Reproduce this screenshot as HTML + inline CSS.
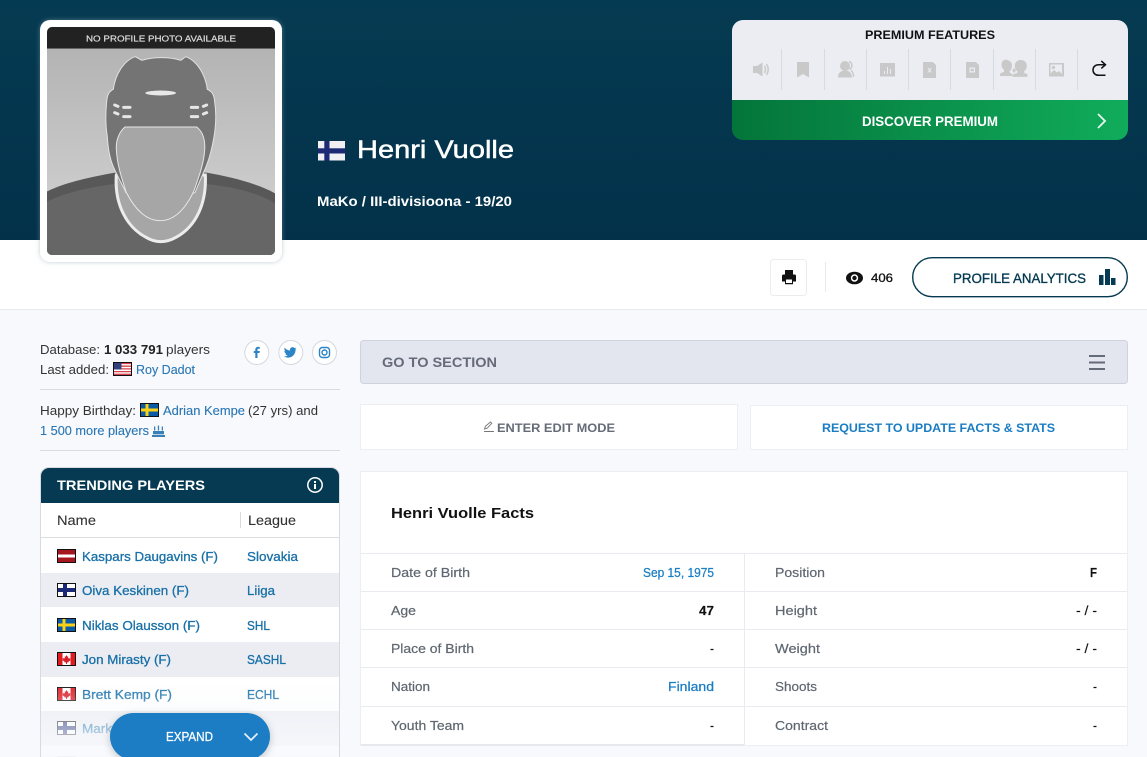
<!DOCTYPE html>
<html lang="en"><head><meta charset="utf-8"><title>Henri Vuolle</title>
<style>
html,body{margin:0;padding:0;width:1147px;height:757px;overflow:hidden;background:#f7f9fd}
svg{display:block}
text{font-family:"Liberation Sans",sans-serif;font-size:13px;white-space:pre}
.b{font-weight:bold}
.lnk{fill:#2a76b3;stroke:#2a76b3;stroke-width:.12}
.tn{fill:#1870a8;font-size:13px;stroke:#1870a8;stroke-width:.3}
.lab{fill:#5f6771;font-size:12.5px;stroke:#5f6771;stroke-width:.2}
.val{fill:#111;font-size:12.5px;stroke:#111;stroke-width:.15}
.blu{fill:#1a7dc4}
.bs{stroke:#1a7dc4;stroke-width:.25}
</style></head><body>
<svg width="1147" height="757" viewBox="0 0 1147 757" xmlns="http://www.w3.org/2000/svg">
<defs>
<linearGradient id="hd" x1="0" y1="0" x2="0" y2="1"><stop offset="0" stop-color="#053b52"/><stop offset="1" stop-color="#03314a"/></linearGradient>
<linearGradient id="ph" x1="0" y1="0" x2="0" y2="1"><stop offset="0" stop-color="#b0b0b0"/><stop offset="1" stop-color="#d6d6d6"/></linearGradient>
<linearGradient id="gr" x1="0" y1="0" x2="1" y2="0"><stop offset="0" stop-color="#04753a"/><stop offset="1" stop-color="#10ac5b"/></linearGradient>
<linearGradient id="fade" x1="0" y1="0" x2="0" y2="1"><stop offset="0" stop-color="#f7f9fd" stop-opacity="0"/><stop offset="1" stop-color="#f7f9fd" stop-opacity=".95"/></linearGradient>
<clipPath id="pc"><rect x="47" y="27" width="228" height="228" rx="5"/></clipPath>
<clipPath id="pm"><rect x="732" y="20" width="396" height="120" rx="11"/></clipPath>
<clipPath id="tc"><path d="M41 757V476a8 8 0 0 1 8-8h282a8 8 0 0 1 8 8v281z"/></clipPath>
<filter id="sh" x="-20%" y="-20%" width="140%" height="140%"><feDropShadow dx="0" dy="0" stdDeviation="2.5" flood-color="#8aa0ac" flood-opacity=".55"/></filter>
<filter id="sh2" x="-20%" y="-20%" width="140%" height="160%"><feDropShadow dx="0" dy="2" stdDeviation="4" flood-color="#000" flood-opacity=".22"/></filter>
<g id="fi"><rect width="19" height="14" fill="#fff"/><rect x="0" y="5" width="19" height="4" fill="#1a2a78"/><rect x="6" y="0" width="4" height="14" fill="#1a2a78"/><rect x=".5" y=".5" width="18" height="13" fill="none" stroke="#111"/></g>
<g id="se"><rect width="19" height="14" fill="#0a5aa5"/><rect x="0" y="5.500" width="19" height="3" fill="#f7d116"/><rect x="5.500" y="0" width="3" height="14" fill="#f7d116"/><rect x=".5" y=".5" width="18" height="13" fill="none" stroke="#111"/></g>
<g id="ca"><rect width="19" height="14" fill="#fff"/><rect width="5.500" height="14" fill="#e01b22"/><rect x="13.500" width="5.500" height="14" fill="#e01b22"/><path d="M9.500 3l.9 1.700.9-.4-.3 2.300 1.200-.9.300.9 1-.2-.4 1.300.5.400-2.200 1.500.2.800H10v1.600H9v-1.600H7.400l.2-.8-2.200-1.500.5-.4-.4-1.300 1 .2.300-.9 1.200.9-.3-2.300.9.400z" fill="#d81e26"/><rect x=".5" y=".5" width="18" height="13" fill="none" stroke="#111"/></g>
</defs>

<rect width="1147" height="757" fill="#f7f9fd"/>
<rect width="1147" height="240" fill="url(#hd)"/>
<rect y="240" width="1147" height="69" fill="#fff"/>
<rect y="309" width="1147" height="1" fill="#e8eaef"/>

<!-- photo card -->
<rect x="40" y="20" width="242" height="242" rx="10" fill="#fff" filter="url(#sh)"/>
<g clip-path="url(#pc)">
<rect x="47" y="27" width="228" height="228" fill="url(#ph)"/>
<rect x="47" y="27" width="228" height="21" fill="#222"/>
<rect x="47" y="48" width="228" height="1" fill="#666"/>
<g transform="translate(20 0) scale(.33333)">
<path d="M80 575C140 545 220 530 285 518L560 518C630 530 710 550 765 580V770H80Z" fill="#585858"/>
<path d="M80 605C140 575 220 560 285 552L560 552C630 560 710 575 765 610V770H80Z" fill="#666"/>
<path d="M289 525C283 610 318 680 378 712Q422 738 468 712C528 680 560 610 556 525Z" fill="#a6a6a6" stroke="#ececec" stroke-width="9"/>
<path d="M345 170C352 172 358 178 366 181C400 170 450 170 482 181C488 178 492 172 498 170C530 182 556 222 562 268C575 274 582 282 584 305C590 345 588 375 582 410C576 445 570 470 560 495C548 525 536 550 525 578L420 600L318 578C305 550 290 525 278 495C268 470 264 445 262 410C256 375 256 345 260 305C262 282 268 274 280 268C286 222 312 182 345 170Z" fill="#747474" stroke="#e2e2e2" stroke-width="3"/>
<path d="M315 381H530C548 395 556 420 554 450C552 490 535 535 522 572C495 630 460 662 420 662C380 662 345 630 318 575C305 535 290 490 289 445C288 420 298 395 315 381Z" fill="#a6a6a6" stroke="#e6e6e6" stroke-width="3"/>
<ellipse cx="422" cy="279" rx="46" ry="7.500" fill="#e8e8e8"/>
<g fill="none" stroke="#e6e6e6" stroke-width="9" stroke-linecap="round"><path d="M284 315l10 4M311 322h19M284 338l10 4M311 350h19M560 315l-10 4M533 322h-19M560 338l-10 4M533 350h-19"/></g>
</g>
</g>
<text x="86" y="41.500" fill="#dcdcdc" stroke="#dcdcdc" stroke-width=".2" style="font-size:8.500px" textLength="150" lengthAdjust="spacingAndGlyphs">NO PROFILE PHOTO AVAILABLE</text>

<!-- name -->
<rect x="318" y="141" width="27" height="19.500" fill="#f0f0f4"/>
<rect x="318" y="148.300" width="27" height="5.200" fill="#1c2a75"/>
<rect x="324.300" y="141" width="5.200" height="19.500" fill="#1c2a75"/>
<text x="357" y="158" fill="#fff" stroke="#fff" stroke-width=".45" style="font-size:25px" textLength="157" lengthAdjust="spacingAndGlyphs">Henri Vuolle</text>
<text x="317" y="206" fill="#fff" class="b" style="font-size:14px" textLength="195" lengthAdjust="spacingAndGlyphs">MaKo / III-divisioona - 19/20</text>

<!-- premium -->
<g clip-path="url(#pm)">
<rect x="732" y="20" width="396" height="80" fill="#ecedf3"/>
<rect x="732" y="100" width="396" height="40" fill="url(#gr)"/>
</g>
<text x="865" y="39" fill="#111" class="b" style="font-size:12px" textLength="130" lengthAdjust="spacingAndGlyphs">PREMIUM FEATURES</text>
<g fill="#d7dadf"><rect x="781" y="49" width="1" height="41"/><rect x="824" y="49" width="1" height="41"/><rect x="866" y="49" width="1" height="41"/><rect x="908" y="49" width="1" height="41"/><rect x="950" y="49" width="1" height="41"/><rect x="993" y="49" width="1" height="41"/><rect x="1035" y="49" width="1" height="41"/><rect x="1077" y="49" width="1" height="41"/></g>
<g fill="#c9c9c9">
<path d="M753 66h4l5.500-3.500v14L757 73h-4z"/><path d="M764.500 66q2 3.500 0 7M766.500 64q3.500 5.500 0 11" fill="none" stroke="#c9c9c9" stroke-width="1.500"/>
<path d="M797 62h12v15.500l-6-3.500-6 3.500z"/>
<circle cx="845" cy="66" r="5"/><path d="M838 77.500c0-5 3-7 7-7s6.500 2 7 7z"/><path d="M849 61.500c3.500 1 4 6 .5 8M851 70.500c1.500 1 2.500 3.500 2.500 6.500" fill="none" stroke="#c9c9c9" stroke-width="1.500"/>
<path fill-rule="evenodd" d="M880 63h15v13.500h-15zM884 71v3h1v-3zM887 67v7h1v-7zM890 69v5h1v-5z"/>
<path fill-rule="evenodd" d="M923 62h10l3 3v13h-13zM927.500 68l1.500 2.200-1.500 2.300h1.200l.9-1.400.9 1.400h1.200l-1.500-2.300 1.500-2.200h-1.200l-.9 1.400-.9-1.400z"/>
<path fill-rule="evenodd" d="M966 62h10l3 3v13h-13zM969.500 67.500v5h5.500v-5zM970.700 68.700h3.100v2.600h-3.100z"/>
<path d="M1006.500 60c3.500 0 5.500 2.500 5.500 5.500 0 2.800-1 4.700-2.500 5.800l.5 1.700 2.500 1v2h-12.500v-1.600c0-.9.500-1.400 1.500-1.700l2.300-.7.500-1.900c-1.600-1.100-2.800-3-2.800-5.600 0-3.300 2.200-5 5-5z"/>
<path d="M1021 60c3.500 0 5.800 2.500 5.800 5.700 0 2.700-1.200 4.600-2.800 5.600l.5 1.900 3 .9v2.800h-15c0-1.500 1-3 1.500-3l3-.8.500-1.800c-1.700-1.100-2.800-3-2.800-5.600 0-3.200 2.500-5.700 5.800-5.700z"/>
<path d="M1014 68l2 2.500-2 2.500-1.800-2.500z"/>
<path fill-rule="evenodd" d="M1049 63h15v13.500h-15zM1050.500 64.500v9l3.500-3.500 3 2.500 2-1.500 3 3v-9.500zM1053.500 65.700a1.700 1.700 0 1 0 .01 0z"/>
</g>
<path d="M1105.500 75.300h-7c-3.500 0-5.500-2.500-5.500-5.300s2-5.300 5.500-5.300h7M1101.300 61l4.200 3.700-4.200 3.700" fill="none" stroke="#111" stroke-width="1.500"/>
<text x="862" y="126" fill="#fff" class="b" style="font-size:14px" textLength="136" lengthAdjust="spacingAndGlyphs">DISCOVER PREMIUM</text>
<path d="M1098 114l7 7-7 7" fill="none" stroke="#e8f8ee" stroke-width="1.800"/>

<!-- action bar -->
<rect x="770.500" y="259.500" width="36" height="36" rx="3" fill="#fff" stroke="#ececf0"/>
<path fill-rule="evenodd" d="M785 270h8v4.500h1.500c1 0 1.500.6 1.500 1.500v5.500h-3v2.800h-8v-2.800h-3V276c0-.9.500-1.500 1.500-1.500H785zM786 279.500v3.500h6v-3.500z" fill="#111"/>
<rect x="825" y="262" width="1" height="30" fill="#e8e9ed"/>
<ellipse cx="854.500" cy="278" rx="8.500" ry="6.300" fill="#111"/><circle cx="854.500" cy="278" r="3.700" fill="#fff"/><circle cx="854.500" cy="278" r="2.200" fill="#111"/>
<text x="871" y="282" fill="#111" stroke="#111" stroke-width=".3" style="font-size:11.500px" textLength="22" lengthAdjust="spacingAndGlyphs">406</text>
<rect x="912.700" y="257.700" width="214.600" height="39" rx="19.500" fill="#fff" stroke="#063a52" stroke-width="1.400"/>
<text x="953" y="283" fill="#063a52" style="font-size:14px" stroke="#063a52" stroke-width=".35" textLength="133" lengthAdjust="spacingAndGlyphs">PROFILE ANALYTICS</text>
<g fill="#063a52"><rect x="1099" y="275" width="4.500" height="10"/><rect x="1105" y="269" width="5" height="16"/><rect x="1111" y="278" width="4.500" height="7"/></g>

<!-- left info -->
<text x="40" y="354" fill="#333" textLength="60" lengthAdjust="spacingAndGlyphs">Database:</text>
<text x="104" y="354" fill="#222" class="b" textLength="59" lengthAdjust="spacingAndGlyphs">1 033 791</text>
<text x="166" y="354" fill="#333" textLength="44" lengthAdjust="spacingAndGlyphs">players</text>
<text x="40" y="374" fill="#333" textLength="69" lengthAdjust="spacingAndGlyphs">Last added:</text>
<g transform="translate(113 362)"><rect width="19" height="14" fill="#fff"/><path d="M0 1.500h19M0 4.200h19M0 6.900h19M0 9.600h19M0 12.300h19" stroke="#d8404c" stroke-width="1.300"/><rect width="8.500" height="7.500" fill="#33407e"/><rect x=".5" y=".5" width="18" height="13" fill="none" stroke="#111"/></g>
<text x="136" y="374" class="lnk" textLength="59" lengthAdjust="spacingAndGlyphs">Roy Dadot</text>
<g fill="#fff" stroke="#d6d8de"><circle cx="256.800" cy="352.500" r="12"/><circle cx="290.800" cy="352.500" r="12"/><circle cx="324.500" cy="352.500" r="12"/></g>
<path d="M257.500 358v-5h2l.3-2h-2.300v-1.200c0-.7.300-1 1-1h1.300v-1.900h-1.800c-1.900 0-2.700 1.200-2.700 2.800V351h-1.500v2h1.500v5z" fill="#2a84c6"/>
<path d="M296.500 348.500c-.5.200-1 .4-1.500.4.500-.3 1-.8 1.200-1.400-.5.300-1 .5-1.600.6a2.600 2.600 0 0 0-4.500 2.400c-2.200-.1-4.100-1.200-5.400-2.800-.7 1.200-.3 2.700.8 3.500-.4 0-.8-.1-1.200-.3 0 1.300.9 2.400 2.100 2.600-.4.100-.8.100-1.200 0 .3 1 1.300 1.800 2.500 1.800-1.100.9-2.500 1.300-3.900 1.100 4.800 3 11.800.5 11.800-7.200.5-.3.900-.7 1.400-1.200z" fill="#2a84c6"/>
<g fill="none" stroke="#2a84c6" stroke-width="1.400"><rect x="319.500" y="347.500" width="10" height="10" rx="2.800"/><circle cx="324.500" cy="352.500" r="2.500"/></g>
<rect x="40" y="389" width="300" height="1" fill="#d9dbdf"/>
<text x="40" y="415" fill="#333" textLength="96" lengthAdjust="spacingAndGlyphs">Happy Birthday:</text>
<use href="#se" x="140" y="403"/>
<text x="163" y="415" class="lnk" textLength="82" lengthAdjust="spacingAndGlyphs">Adrian Kempe</text>
<text x="248" y="415" fill="#333" textLength="70" lengthAdjust="spacingAndGlyphs">(27 yrs) and</text>
<text x="40" y="435" class="lnk" style="font-size:12.500px" textLength="109" lengthAdjust="spacingAndGlyphs">1 500 more players</text>
<g fill="#3a80b8"><rect x="152" y="435" width="13" height="2"/><rect x="153" y="431" width="11" height="3.300"/><rect x="154" y="426.500" width="1.300" height="4"/><rect x="157.800" y="425.500" width="1.300" height="5"/><rect x="161.700" y="426.500" width="1.300" height="4"/></g>
<rect x="40" y="450" width="300" height="1" fill="#d9dbdf"/>

<!-- trending -->
<rect x="40.500" y="467.500" width="299" height="300" rx="8.500" fill="#fff" stroke="#d7dade"/>
<g clip-path="url(#tc)">
<rect x="41" y="468" width="298" height="35" fill="#063a52"/>
<rect x="41" y="573" width="298" height="34" fill="#ecedf2"/>
<rect x="41" y="642" width="298" height="35" fill="#ecedf2"/>
<rect x="41" y="711" width="298" height="35" fill="#ecedf2"/>
<rect x="41" y="537" width="298" height="1" fill="#dcdee2"/>
</g>
<text x="57" y="490" fill="#fff" class="b" style="font-size:14px" textLength="148" lengthAdjust="spacingAndGlyphs">TRENDING PLAYERS</text>
<circle cx="315" cy="485" r="7.200" fill="none" stroke="#fff" stroke-width="1.500"/><rect x="314" y="484" width="2" height="5" fill="#fff"/><rect x="314" y="481" width="2" height="2" fill="#fff"/>
<text x="57" y="525" fill="#333" stroke="#333" stroke-width=".12" style="font-size:13.500px" textLength="39" lengthAdjust="spacingAndGlyphs">Name</text>
<rect x="240" y="512" width="1" height="16" fill="#d9dbdf"/>
<text x="248" y="525" fill="#333" stroke="#333" stroke-width=".12" style="font-size:13.500px" textLength="48" lengthAdjust="spacingAndGlyphs">League</text>

<g transform="translate(57 549)"><rect width="19" height="14" fill="#a6161e"/><rect y="5.500" width="19" height="3" fill="#fff"/><rect x=".5" y=".5" width="18" height="13" fill="none" stroke="#111"/></g>
<text x="82" y="561" class="tn" textLength="136" lengthAdjust="spacingAndGlyphs">Kaspars Daugavins (F)</text>
<text x="247" y="561" class="tn" textLength="51" lengthAdjust="spacingAndGlyphs">Slovakia</text>
<use href="#fi" x="57" y="583"/>
<text x="82" y="595" class="tn" textLength="107" lengthAdjust="spacingAndGlyphs">Oiva Keskinen (F)</text>
<text x="247" y="595" class="tn" textLength="28" lengthAdjust="spacingAndGlyphs">Liiga</text>
<use href="#se" x="57" y="618"/>
<text x="82" y="630" class="tn" textLength="118" lengthAdjust="spacingAndGlyphs">Niklas Olausson (F)</text>
<text x="247" y="630" class="tn" textLength="23" lengthAdjust="spacingAndGlyphs">SHL</text>
<use href="#ca" x="57" y="652"/>
<text x="82" y="664" class="tn" textLength="89" lengthAdjust="spacingAndGlyphs">Jon Mirasty (F)</text>
<text x="247" y="664" class="tn" textLength="39" lengthAdjust="spacingAndGlyphs">SASHL</text>
<use href="#ca" x="57" y="687"/>
<text x="82" y="699" class="tn" textLength="90" lengthAdjust="spacingAndGlyphs">Brett Kemp (F)</text>
<text x="247" y="699" class="tn" textLength="32" lengthAdjust="spacingAndGlyphs">ECHL</text>
<use href="#fi" x="57" y="721"/>
<text x="82" y="733" class="tn" textLength="30" lengthAdjust="spacingAndGlyphs">Mark</text>
<rect x="57" y="756" width="19" height="1" fill="#888"/>
<rect x="41" y="680" width="298" height="77" fill="url(#fade)"/>

<rect x="110" y="713" width="160" height="47" rx="23.500" fill="#1a7dc4" filter="url(#sh2)"/>
<text x="166" y="741" fill="#fff" style="font-size:12.500px" stroke="#fff" stroke-width=".25" textLength="47" lengthAdjust="spacingAndGlyphs">EXPAND</text>
<path d="M244.500 733.500l6.500 6.500 6.500-6.500" fill="none" stroke="#e8f2fa" stroke-width="1.700"/>

<!-- right -->
<rect x="360.500" y="340.500" width="767" height="43" rx="3" fill="#e3e6ef" stroke="#cfd3df"/>
<text x="382" y="367" fill="#666b78" class="b" style="font-size:14px" textLength="115" lengthAdjust="spacingAndGlyphs">GO TO SECTION</text>
<g fill="#666b78"><rect x="1089" y="355" width="16" height="2"/><rect x="1089" y="361.500" width="16" height="2"/><rect x="1089" y="368" width="16" height="2"/></g>

<rect x="360.500" y="404.500" width="377" height="45" fill="#fff" stroke="#eceef3"/>
<path d="M484 431.500h10M484.500 429l1-2.800 5-4.200 1.300 1.300-4.500 4.800z" fill="none" stroke="#777" stroke-width=".9"/>
<text x="497" y="432" fill="#666b78" class="b" style="font-size:12px" textLength="118" lengthAdjust="spacingAndGlyphs">ENTER EDIT MODE</text>
<rect x="750.500" y="405.500" width="377" height="44" fill="#fff" stroke="#eceef3"/>
<text x="822" y="432" class="blu b" style="font-size:12px" textLength="233" lengthAdjust="spacingAndGlyphs">REQUEST TO UPDATE FACTS &amp; STATS</text>

<rect x="360.500" y="471.500" width="767" height="274" fill="#fff" stroke="#eceef3"/>
<rect x="361" y="744" width="383" height="2" fill="#e6e8ee"/>
<text x="391" y="518" fill="#111" class="b" style="font-size:15px" textLength="143" lengthAdjust="spacingAndGlyphs">Henri Vuolle Facts</text>
<g fill="#e9ebf0"><rect x="361" y="553" width="766" height="1"/><rect x="361" y="591" width="766" height="1"/><rect x="361" y="629" width="766" height="1"/><rect x="361" y="667" width="766" height="1"/><rect x="361" y="706" width="766" height="1"/><rect x="744" y="553" width="1" height="192"/></g>

<text x="391" y="577" class="lab" textLength="79" lengthAdjust="spacingAndGlyphs">Date of Birth</text>
<text x="643" y="577" class="blu bs" style="font-size:13px" textLength="71" lengthAdjust="spacingAndGlyphs">Sep 15, 1975</text>
<text x="775" y="577" class="lab" textLength="50" lengthAdjust="spacingAndGlyphs">Position</text>
<text x="1090" y="577" class="val b" style="font-size:13px" textLength="7" lengthAdjust="spacingAndGlyphs">F</text>

<text x="391" y="615" class="lab" textLength="25" lengthAdjust="spacingAndGlyphs">Age</text>
<text x="699" y="615" class="val b" textLength="15" lengthAdjust="spacingAndGlyphs">47</text>
<text x="775" y="615" class="lab" textLength="42" lengthAdjust="spacingAndGlyphs">Height</text>
<text x="1076" y="615" class="val" textLength="21" lengthAdjust="spacingAndGlyphs">- / -</text>

<text x="391" y="653" class="lab" textLength="83" lengthAdjust="spacingAndGlyphs">Place of Birth</text>
<text x="710" y="653" class="val" textLength="4" lengthAdjust="spacingAndGlyphs">-</text>
<text x="775" y="653" class="lab" textLength="45" lengthAdjust="spacingAndGlyphs">Weight</text>
<text x="1076" y="653" class="val" textLength="21" lengthAdjust="spacingAndGlyphs">- / -</text>

<text x="391" y="691" class="lab" textLength="39" lengthAdjust="spacingAndGlyphs">Nation</text>
<text x="668" y="691" class="blu bs" style="font-size:12.500px" textLength="46" lengthAdjust="spacingAndGlyphs">Finland</text>
<text x="775" y="691" class="lab" textLength="42" lengthAdjust="spacingAndGlyphs">Shoots</text>
<text x="1093" y="691" class="val" textLength="4" lengthAdjust="spacingAndGlyphs">-</text>

<text x="391" y="730" class="lab" textLength="73" lengthAdjust="spacingAndGlyphs">Youth Team</text>
<text x="710" y="730" class="val" textLength="4" lengthAdjust="spacingAndGlyphs">-</text>
<text x="775" y="730" class="lab" textLength="53" lengthAdjust="spacingAndGlyphs">Contract</text>
<text x="1093" y="730" class="val" textLength="4" lengthAdjust="spacingAndGlyphs">-</text>
</svg>
</body></html>
